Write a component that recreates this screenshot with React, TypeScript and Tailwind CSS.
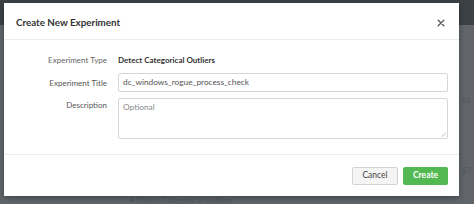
import React from 'react';

function CloseIcon() {
  return (
    <svg width="8" height="8" viewBox="0 0 8 8" className="text-[#555]">
      <path d="M1.2 1.2L6.8 6.8M6.8 1.2L1.2 6.8" stroke="currentColor" strokeWidth="1.3" strokeLinecap="round" />
    </svg>
  );
}

export default function App() {
  return (
    <div className="relative w-[474px] h-[204px] overflow-hidden bg-[#62666b] font-['Lato',sans-serif]">
      {/* page behind the overlay */}
      <div className="h-[25px] bg-[#3c4146]" />
      <div className="absolute left-[462px] top-[93px] text-[9px] text-[#55595d]">ca</div>
      <div className="absolute left-[462px] top-[162px] text-[9px] text-[#55595d]">ga</div>
      <div className="absolute left-[130px] top-[196px] text-[8px] leading-none text-[#52565a]">• Detect Categorical Outliers</div>

      {/* modal */}
      <div className="absolute left-[4px] top-[3px] w-[455px] h-[193px] bg-white flex flex-col shadow-[0_2px_6px_rgba(0,0,0,0.35)]">
        <div className="h-[37px] flex items-center justify-between pl-[12px] pr-[12px] pt-[3px] border-b border-[#ececec]">
          <h2 className="text-[9.8px] font-bold text-[#333]">Create New Experiment</h2>
          <button className="flex items-center justify-center w-[12px] h-[12px]">
            <CloseIcon />
          </button>
        </div>

        <div className="flex-1 grid grid-cols-[103px_330px] gap-x-[11px] content-start pt-[13px] text-[8px]">
          <div className="h-[14px] flex items-center justify-end text-[#666]">Experiment Type</div>
          <div className="h-[14px] flex items-center font-bold text-[#333]">Detect Categorical Outliers</div>

          <div className="mt-[6px] h-[19px] flex items-center justify-end text-[#555]">Experiment Title</div>
          <div className="mt-[6px] h-[19px] flex items-center border border-[#d6d6d6] rounded-[2px] px-[4px] text-[8.3px] text-[#555]">
            dc_windows_rogue_process_check
          </div>

          <div className="mt-[6px] h-[14px] flex items-center justify-end text-[#555]">Description</div>
          <div className="mt-[6px] relative h-[41px] border border-[#d6d6d6] rounded-[2px] px-[4px] pt-[2px] text-[8.3px] text-[#888]">
            Optional
            <svg width="5" height="5" viewBox="0 0 5 5" className="absolute right-[1px] bottom-[1px]">
              <path d="M4.5 0.5L0.5 4.5M4.5 2.5L2.5 4.5" stroke="#aaa" strokeWidth="0.6" />
            </svg>
          </div>
        </div>

        <div className="h-[42px] flex items-center justify-end gap-[5px] pr-[11px] border-t border-[#ececec]">
          <button className="w-[46px] h-[18px] rounded-[2px] border border-[#d4d4d4] bg-[#f4f4f4] text-[8.5px] text-[#444]">
            Cancel
          </button>
          <button className="w-[45px] h-[18px] rounded-[2px] bg-[#52b952] text-[8.5px] font-bold text-white">
            Create
          </button>
        </div>
      </div>
    </div>
  );
}
